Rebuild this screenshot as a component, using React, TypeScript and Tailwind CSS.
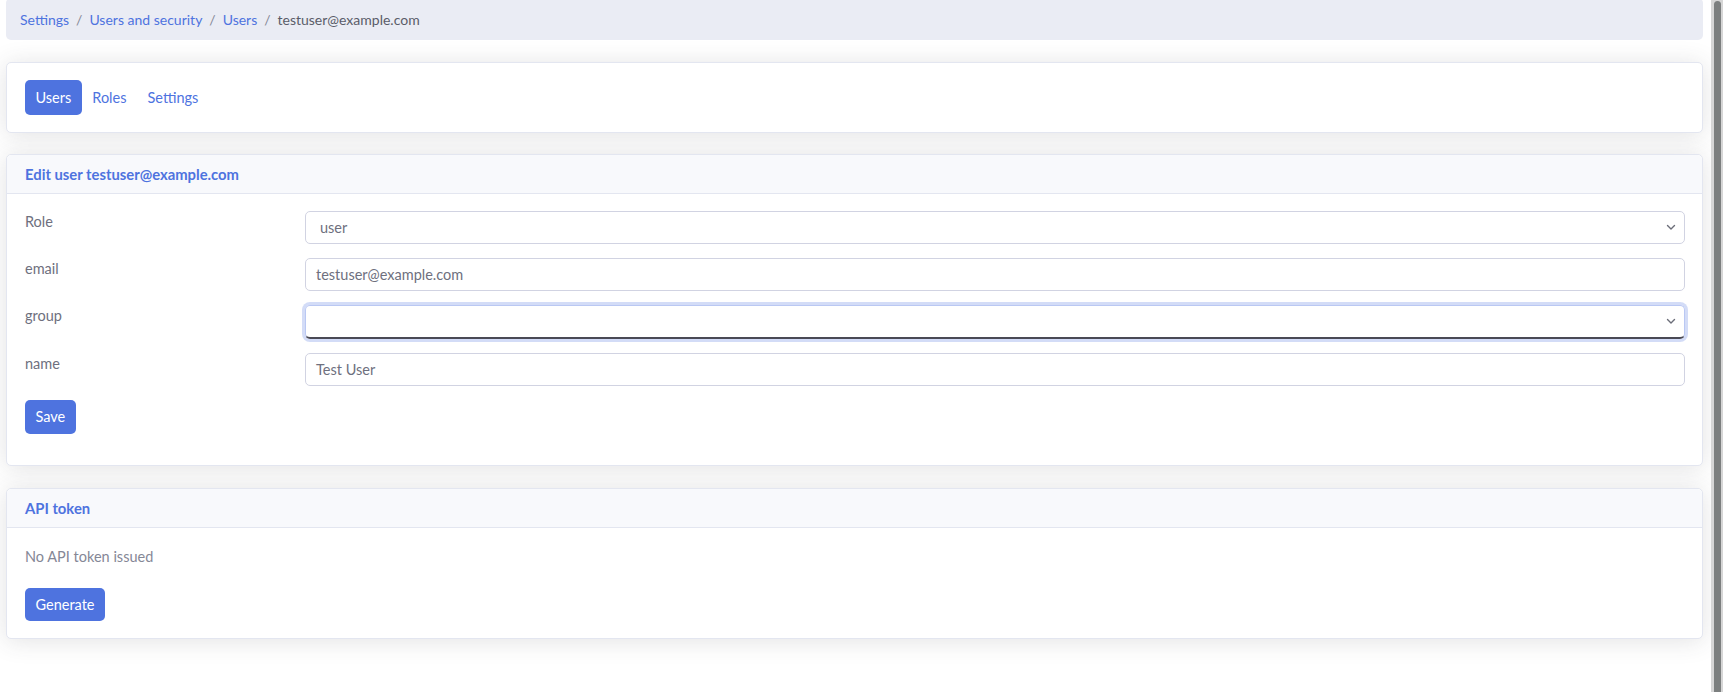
import { useState } from 'react';

const FONT = "font-['Lato','Liberation_Sans',sans-serif]";

function Chevron() {
  return (
    <svg width="10" height="7" viewBox="0 0 10 7" fill="none" stroke="#6b6d78" strokeWidth="1.4" strokeLinecap="round" strokeLinejoin="round">
      <path d="M1.5 1.5L5 5l3.5-3.5" />
    </svg>
  );
}

function Card({ title, children }: { title?: string; children: React.ReactNode }) {
  return (
    <div className="rounded-[5px] border border-[#e3e6f0] bg-white shadow-[0_2px_24px_0_rgba(58,59,69,0.15)]">
      {title && (
        <div className="border-b border-[#e3e6f0] bg-[#f8f9fc] rounded-t-[5px] pl-[18px] pr-[17px] py-[10px]">
          <h6 className="text-[14.8px] leading-[18px] font-bold text-[#4e73df]">{title}</h6>
        </div>
      )}
      <div className="pl-[18px] pr-[17px] py-[17px]">{children}</div>
    </div>
  );
}

function Field({ label, children }: { label: string; children: React.ReactNode }) {
  return (
    <div className="flex mb-[14px]">
      <label className="w-[280px] shrink-0 text-[14.5px] leading-[21px] text-[#6e707e]">{label}</label>
      <div className="flex-1">{children}</div>
    </div>
  );
}

export default function App() {
  const [tab, setTab] = useState('Users');
  const tabs = ['Users', 'Roles', 'Settings'];

  return (
    <div className={`flex min-h-screen bg-white ${FONT}`}>
      <div className="flex-1 min-w-0 pl-[6px] pr-[8px] pb-[40px]">
        {/* Breadcrumb */}
        <nav className="-mt-[2px] mb-[22px] flex h-[42px] items-center rounded-[5px] bg-[#eaecf4] px-[14px] text-[14px] text-[#858796]">
          <a className="text-[#4e73df]">Settings</a>
          <span className="px-[7px]">/</span>
          <a className="text-[#4e73df]">Users and security</a>
          <span className="px-[7px]">/</span>
          <a className="text-[#4e73df]">Users</a>
          <span className="px-[7px]">/</span>
          <span className="text-[#5a5c69]">testuser@example.com</span>
        </nav>

        {/* Tabs */}
        <div className="mb-[21px]">
          <Card>
            <div className="flex">
              {tabs.map((t) => (
                <button
                  key={t}
                  onClick={() => setTab(t)}
                  className={`rounded-[5px] px-[10.5px] py-[7px] text-[14.5px] leading-[21px] ${
                    tab === t ? 'bg-[#4e73df] text-white' : 'text-[#4e73df]'
                  }`}
                >
                  {t}
                </button>
              ))}
            </div>
          </Card>
        </div>

        {/* Edit user */}
        <div className="mb-[22px]">
          <Card title="Edit user testuser@example.com">
            <Field label="Role">
              <div className="flex h-[33px] items-center justify-between rounded-[5px] border border-[#d1d3e2] pl-[14px] pr-[8px] text-[14.5px] text-[#6e707e]">
                <span>user</span>
                <Chevron />
              </div>
            </Field>
            <Field label="email">
              <div className="flex h-[33px] items-center rounded-[5px] border border-[#d1d3e2] px-[10px] text-[14.5px] text-[#6e707e]">
                testuser@example.com
              </div>
            </Field>
            <Field label="group">
              <div className="flex h-[34px] items-center justify-end rounded-[5px] border border-[#bac8f3] border-b-2 border-b-[#4a4a55] pr-[8px] shadow-[0_0_0_3px_rgba(78,115,223,0.25)]">
                <Chevron />
              </div>
            </Field>
            <Field label="name">
              <div className="flex h-[33px] items-center rounded-[5px] border border-[#d1d3e2] px-[10px] text-[14.5px] text-[#6e707e]">
                Test User
              </div>
            </Field>
            <button className="mb-[14px] h-[34px] rounded-[5px] bg-[#4e73df] px-[10.5px] text-[14.5px] text-white">
              Save
            </button>
          </Card>
        </div>

        {/* API token */}
        <Card title="API token">
          <p className="mt-[1px] mb-[21px] text-[14.5px] leading-[21px] text-[#858796]">No API token issued</p>
          <button className="h-[33px] rounded-[5px] bg-[#4e73df] px-[10.5px] text-[14.5px] text-white">
            Generate
          </button>
        </Card>
      </div>

      {/* Scrollbar */}
      <div className="flex w-[12px] shrink-0 justify-center bg-[#d6d6d6]">
        <div className="mt-[1px] w-[7px] rounded-t-[4px] bg-[#7c7f7f]" />
      </div>
    </div>
  );
}
